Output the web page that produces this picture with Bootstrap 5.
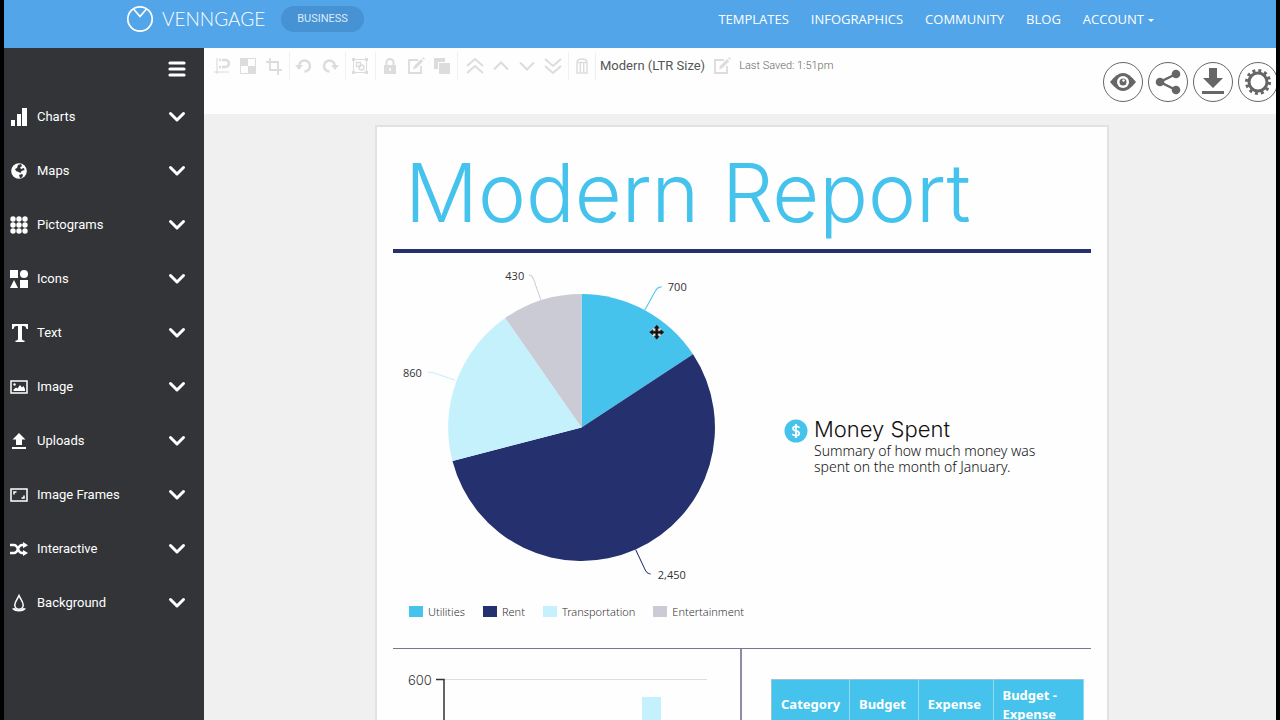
<!DOCTYPE html>
<html lang="en">
<head>
<meta charset="utf-8">
<meta name="viewport" content="width=device-width, initial-scale=1">
<title>Venngage – Modern (LTR Size)</title>
<link href="https://cdn.jsdelivr.net/npm/bootstrap@5.3.0/dist/css/bootstrap.min.css" rel="stylesheet">
<style>
  :root { --sky: #45c3ec; --navy: #25306e; --ice: #c5f1fd; --stone: #cbcbd5; }
  body { background: #000; padding: 0 4px; font-family: Roboto, "Open Sans", sans-serif; font-weight: 300; }
  .topbar { background: #52a5e9; min-height: 48px; padding-bottom: 10px; color: #fff; }
  .topbar-inner { max-width: 1028px; }
  .brand-name { font: 300 19px/28px Lato, sans-serif; }
  .plan { background: #4792d3; color: #d8ecfc; font-size: 11px; font-weight: 400; line-height: 26px; padding: 0 16px; }
  .main-links { gap: 22px; font: 400 13px/28px "Open Sans", sans-serif; }
  .main-links a { color: #fff; text-decoration: none; }
  .main-links .dropdown-toggle::after { border-width: 3px; border-bottom-width: 0; margin-left: 4px; vertical-align: 2px; }
  .side { width: 200px; background: #333437; }
  .side button { border: 0; background: none; color: #fff; text-align: left; }
  .side-toggle { height: 42px; padding: 0 18px; }
  .side-item { height: 54px; padding: 0 18px 0 6px; gap: 9px; font-size: 13px; }
  .workspace { min-width: 0; background: #f0f0f0; }
  .tools { height: 66px; background: #fefefe; }
  .tool-group { height: 28px; padding: 0 2px 0 1px; border-right: 1px solid #f0f0f0; }
  .tool-btn { width: 26px; height: 28px; padding: 0; border: 0; background: none; color: #dcdcdc; }
  .tool-btn svg, .side-item svg { display: block; margin: auto; }
  .side-item svg { margin: 0; }
  .doc-name { font-size: 13px; color: #555; font-weight: 400; }
  .saved { font-size: 11px; color: #666; }
  .round-actions { gap: 5px; margin: 14px -2px 0 0; }
  .round-btn { width: 40px; height: 40px; border: 1px solid #666; background: #fff; color: #666; padding: 0; }
  .canvas-area { padding: 11px 0 0 4px; }
  .sheet { width: 100%; max-width: 734px; min-height: 950px; border: 2px solid #e2e2e2; background: #fefefe; padding: 24px 16px 0; }
  .sheet h1 { font: 300 81px/84px Inter, sans-serif; color: var(--sky); margin: 0 0 0 12px; white-space: nowrap; }
  .thick-rule { height: 4px; background: var(--navy); opacity: 1; border: 0; margin: 14px 0 9px; }
  .legend-row { gap: 18px; padding: 0 16px; font: 300 11px/16px "Noto Sans", sans-serif; color: #333; margin-top: 13px; }
  .legend-row li { gap: 5px; }
  .swatch { width: 14px; height: 11px; }
  .note { padding: 38px 0 0 42px; font-family: "Noto Sans", sans-serif; }
  .note-text { margin-left: 6px; }
  .note h2 { font: 300 22px/28px Inter, sans-serif; color: #111; margin: 0; }
  .note p { font-size: 14px; line-height: 16px; color: #111; margin: 0; }
  .lower { border-top: 1px solid #77778f; margin-top: 28px; }
  .lower-left { border-right: 2px solid #8c8ca4; height: 300px; }
  .lower-right { padding: 30px 7px 0 29px; }
  .budget { font: 700 13px/19px "Noto Sans", sans-serif; table-layout: fixed; width: 100%; border: 1px solid #9cc4cf; }
  .budget th { background: var(--sky); color: #fff; padding: 6px 4px 6px 9px; vertical-align: middle; border-right: 1px solid #8fdbf4; }
  svg text { fill: #333; }
</style>
</head>
<body>
<svg width="0" height="0" class="position-absolute" aria-hidden="true">
  <symbol id="chev" viewBox="0 0 18 12"><path d="M2.500 2.500 9 9l6.500-6.500" fill="none" stroke="currentColor" stroke-width="3" stroke-linecap="round" stroke-linejoin="round"/></symbol>
  <symbol id="edit" viewBox="0 0 18 18"><path d="M11 3H2v13h12V9" fill="none" stroke="currentColor" stroke-width="1.800"/><path d="m6 12.500 1-3.500L14 2l2.200 2.200-7 7zM15 1l1-1 2 2-1 1z" fill="currentColor"/></symbol>
</svg>
<div class="vh-100 d-flex flex-column overflow-hidden">
  <header class="topbar">
    <div class="topbar-inner mx-auto d-flex align-items-center h-100">
      <a href="#" class="d-flex align-items-center text-white text-decoration-none">
        <svg width="28" height="28" viewBox="0 0 28 28" fill="none" stroke="#fff" stroke-width="1.700"><circle cx="14" cy="14" r="12.200"/><path d="M7.500 4 14 11.500 20.500 4"/></svg>
        <span class="brand-name ms-2">VENNGAGE</span>
      </a>
      <span class="plan rounded-pill ms-3">BUSINESS</span>
      <nav class="main-links d-flex ms-auto">
        <a href="#">TEMPLATES</a><a href="#">INFOGRAPHICS</a><a href="#">COMMUNITY</a><a href="#">BLOG</a><a href="#" class="dropdown-toggle">ACCOUNT</a>
      </nav>
    </div>
  </header>
  <div class="d-flex flex-grow-1 overflow-hidden">
    <aside class="side flex-shrink-0 d-flex flex-column">
      <button class="side-toggle d-flex align-items-center justify-content-end" aria-label="Menu"><svg width="18" height="16" viewBox="0 0 18 16"><path d="M2 2h14M2 8h14M2 14h14" stroke="#fff" stroke-width="3.200" stroke-linecap="round"/></svg></button>
      <button class="side-item d-flex align-items-center"><svg width="18" height="18" fill="#fff"><path d="M1 12h4v6H1zM7 6h4v12H7zM12 0h5v18h-5z"/></svg><span>Charts</span><svg class="ms-auto" width="18" height="12"><use href="#chev"/></svg></button>
      <button class="side-item d-flex align-items-center"><svg width="18" height="18"><circle cx="9" cy="9" r="7.800" fill="#fff"/><path d="M8 3l3-1 1 2-2 1.500 1 1.500 3-1 .5 2-3 1-1 2-2-1-2.500-1L5 7l2-1zM9 13l3-1 1 1-1 2.500-2 .5z" fill="#333437"/></svg><span>Maps</span><svg class="ms-auto" width="18" height="12"><use href="#chev"/></svg></button>
      <button class="side-item d-flex align-items-center"><svg width="18" height="18" fill="#fff"><circle cx="3" cy="3" r="2.700"/><circle cx="9" cy="3" r="2.700"/><circle cx="15" cy="3" r="2.700"/><circle cx="3" cy="9" r="2.700"/><circle cx="9" cy="9" r="2.700"/><circle cx="15" cy="9" r="2.700"/><circle cx="3" cy="15" r="2.700"/><circle cx="9" cy="15" r="2.700"/><circle cx="15" cy="15" r="2.700"/></svg><span>Pictograms</span><svg class="ms-auto" width="18" height="12"><use href="#chev"/></svg></button>
      <button class="side-item d-flex align-items-center"><svg width="18" height="18" fill="#fff"><path d="M0 0h8v8H0zM10 10h8v8h-8zM4 10l4 8H0z"/><circle cx="14" cy="4" r="4"/></svg><span>Icons</span><svg class="ms-auto" width="18" height="12"><use href="#chev"/></svg></button>
      <button class="side-item d-flex align-items-center"><svg width="18" height="18" fill="#fff"><path d="M2 0h16v5h-1.500C16 2.500 15 2 12 2v12.500c0 1.500.5 2 2.500 2V18h-9v-1.500c2 0 2.500-.5 2.500-2V2C5 2 4 2.500 3.500 5H2z"/></svg><span>Text</span><svg class="ms-auto" width="18" height="12"><use href="#chev"/></svg></button>
      <button class="side-item d-flex align-items-center"><svg width="18" height="14"><path d="M1 1h16v12H1z" fill="none" stroke="#fff" stroke-width="1.500"/><path d="M3.500 11V9.500L6 7.500l1.500 1L10 5l2 2.500L13.500 6l1.500 3v2z" fill="#fff"/><circle cx="4.500" cy="4.500" r="1.200" fill="#fff"/></svg><span>Image</span><svg class="ms-auto" width="18" height="12"><use href="#chev"/></svg></button>
      <button class="side-item d-flex align-items-center"><svg width="18" height="18" fill="#fff"><path d="M9 1l6.500 6.500H12V13H6V7.500H2.500zM2 15h14v2H2z"/></svg><span>Uploads</span><svg class="ms-auto" width="18" height="12"><use href="#chev"/></svg></button>
      <button class="side-item d-flex align-items-center"><svg width="18" height="14" fill="none" stroke="#fff" stroke-width="1.500"><path d="M1 1h16v12H1z"/><path d="M4 6.500V4h2.500M14 7.500V10h-2.500"/></svg><span>Image Frames</span><svg class="ms-auto" width="18" height="12"><use href="#chev"/></svg></button>
      <button class="side-item d-flex align-items-center"><svg width="18" height="14"><path d="M0 3h4c5 0 3 8 8 8h2M0 11h4c5 0 3-8 8-8h2" fill="none" stroke="#fff" stroke-width="2.300"/><path d="M13 0l5 3.200L13 6.200zM13 8l5 3-5 3z" fill="#fff"/></svg><span>Interactive</span><svg class="ms-auto" width="18" height="12"><use href="#chev"/></svg></button>
      <button class="side-item d-flex align-items-center"><svg width="18" height="18"><path d="M9 1.500C7 6 4.800 8 4.800 11a4.200 4.200 0 0 0 8.400 0C13.200 8 11 6 9 1.500z" fill="none" stroke="#fff" stroke-width="1.500"/><path d="M2 14.500l3-.5c2 2 6 2 8 0l3 .5c-1 2-4 3-7 3s-6-1-7-3z" fill="#fff"/></svg><span>Background</span><svg class="ms-auto" width="18" height="12"><use href="#chev"/></svg></button>
    </aside>
    <main class="workspace flex-grow-1 overflow-hidden">
      <div class="tools d-flex align-items-start">
        <div class="d-flex align-items-center ps-1 pt-1">
          <div class="tool-group d-flex">
            <button class="tool-btn" aria-label="Snap"><svg width="18" height="18" fill="none" stroke="currentColor"><path d="M4 1v16M1 15h15" stroke-width="1.200"/><path d="M9 3h3.500a3 3 0 0 1 0 7H9" stroke-width="2.500"/><path d="M6 3h2M6 10h2" stroke-width="2.500"/></svg></button>
            <button class="tool-btn" aria-label="Opacity"><svg width="18" height="18"><path d="M1.500 1.500h15v15h-15z" fill="none" stroke="currentColor"/><path d="M1 1h8v8H1zM9 9h8v8H9z" fill="currentColor"/></svg></button>
            <button class="tool-btn" aria-label="Crop"><svg width="18" height="18" fill="none" stroke="currentColor" stroke-width="1.800"><path d="M1 5h12v13M5 1v12h12"/></svg></button>
          </div>
          <div class="tool-group d-flex">
            <button class="tool-btn" aria-label="Undo"><svg width="18" height="18"><path d="M4 9a5.500 5.500 0 1 1 5.500 5.500" fill="none" stroke="currentColor" stroke-width="2.500"/><path d="M0 8h8l-4 5z" fill="currentColor"/></svg></button>
            <button class="tool-btn" aria-label="Redo"><svg width="18" height="18"><path d="M14 9a5.500 5.500 0 1 0-5.500 5.500" fill="none" stroke="currentColor" stroke-width="2.500"/><path d="M10 8h8l-4 5z" fill="currentColor"/></svg></button>
          </div>
          <div class="tool-group d-flex">
            <button class="tool-btn" aria-label="Group"><svg width="18" height="18" fill="none" stroke="currentColor"><path d="M2.500 2.500h13v13h-13z"/><path d="M1 1h3v3H1zM14 1h3v3h-3zM1 14h3v3H1zM14 14h3v3h-3z" fill="currentColor" stroke="none"/><path d="M5.500 5.500h4v4h-4z" stroke-width="1.400"/><circle cx="10.500" cy="10.500" r="2.500" stroke-width="1.400"/></svg></button>
          </div>
          <div class="tool-group d-flex">
            <button class="tool-btn" aria-label="Lock"><svg width="18" height="18"><path d="M5.500 9V5.500a3.500 3.500 0 0 1 7 0V9" fill="none" stroke="currentColor" stroke-width="2"/><path d="M3 8h12v9H3z" fill="currentColor"/><path d="M9 11v3" stroke="#fff" stroke-width="1.500"/></svg></button>
            <button class="tool-btn" aria-label="Edit"><svg width="18" height="18"><use href="#edit"/></svg></button>
            <button class="tool-btn" aria-label="Duplicate"><svg width="18" height="18" fill="currentColor"><path d="M1 1h11v4H5v7H1zM6 6h11v11H6z"/></svg></button>
          </div>
          <div class="tool-group d-flex ps-1">
            <button class="tool-btn" aria-label="Bring to front"><svg width="18" height="18" fill="none" stroke="currentColor" stroke-width="2"><path d="M1 9l8-7 8 7M1 16l8-7 8 7"/></svg></button>
            <button class="tool-btn" aria-label="Bring forward"><svg width="18" height="18" fill="none" stroke="currentColor" stroke-width="2"><path d="M2 12.500l7-7 7 7"/></svg></button>
            <button class="tool-btn" aria-label="Send backward"><svg width="18" height="18" fill="none" stroke="currentColor" stroke-width="2"><path d="M2 5.500l7 7 7-7"/></svg></button>
            <button class="tool-btn" aria-label="Send to back"><svg width="18" height="18" fill="none" stroke="currentColor" stroke-width="2"><path d="M1 2l8 7 8-7M1 9l8 7 8-7"/></svg></button>
          </div>
          <div class="tool-group d-flex px-0">
            <button class="tool-btn" aria-label="Delete"><svg width="18" height="18" fill="none" stroke="currentColor" stroke-width="1.400"><path d="M4 5.500h10V16H4zM4 5.500Q4 2 9 2t5 3.500M7.300 6v9M10.700 6v9"/></svg></button>
          </div>
          <span class="doc-name ms-1">Modern (LTR Size)</span>
          <button class="tool-btn ms-1" aria-label="Rename"><svg width="18" height="18"><use href="#edit"/></svg></button>
          <span class="saved ms-1">Last Saved: 1:51pm</span>
        </div>
        <div class="round-actions d-flex ms-auto">
          <button class="round-btn rounded-circle" aria-label="Preview"><svg width="28" height="28" viewBox="0 0 28 28"><path d="M1 14Q8 5 14 5t13 9q-7 9-13 9T1 14z" fill="currentColor"/><circle cx="14" cy="14" r="6" fill="#fff"/><circle cx="14" cy="14" r="3.500" fill="currentColor"/><circle cx="14.500" cy="12.500" r="1.200" fill="#fff"/></svg></button>
          <button class="round-btn rounded-circle" aria-label="Share"><svg width="28" height="28" viewBox="0 0 28 28"><path d="M22 6 6 14l16 8" fill="none" stroke="currentColor" stroke-width="2.500"/><g fill="currentColor"><circle cx="22" cy="6" r="4.300"/><circle cx="6" cy="14" r="4.300"/><circle cx="22" cy="22" r="4.300"/></g></svg></button>
          <button class="round-btn rounded-circle" aria-label="Download"><svg width="28" height="28" viewBox="0 0 28 28" fill="currentColor"><path d="M10 0h8v10h6L14 20 4 10h6zM3 23h22v3H3z"/></svg></button>
          <button class="round-btn rounded-circle" aria-label="Settings"><svg width="28" height="28" viewBox="0 0 28 28" fill="none" stroke="currentColor"><circle cx="14" cy="14" r="9" stroke-width="3"/><circle cx="14" cy="14" r="11.500" stroke-width="3" stroke-dasharray="3 3.020"/></svg></button>
        </div>
      </div>
      <div class="canvas-area">
        <article class="sheet mx-auto">
          <h1>Modern Report</h1>
          <hr class="thick-rule">
          <div class="row g-0 align-items-center">
            <div class="col-6">
              <svg class="d-block w-100" viewBox="394 262 348 328" font-family="Open Sans, sans-serif" font-size="11" font-weight="400" role="img" aria-label="Spending by category">
                <path d="M582 427V294A133 133 0 0 1 693.200 354.100z" fill="#45c3ec"/>
                <path d="M582 427 693.200 354.100A133 133 0 1 1 453.300 460.500z" fill="#25306e"/>
                <path d="M582 427 453.300 460.500A133 133 0 0 1 505.900 317.900z" fill="#c5f1fd"/>
                <path d="M582 427 505.900 317.900A133 133 0 0 1 582 294z" fill="#cbcbd5"/>
                <g fill="none"><path d="M645 310l10-18q3-6 7-5" stroke="#45c3ec"/><path d="M541.500 300l-7-20q-2-5-5-5" stroke="#cbcbd5"/><path d="M456 380l-20-7q-3-1-7-1" stroke="#c5f1fd"/><path d="M636 549l9 19q2 5 6 5" stroke="#25306e"/></g>
                <text x="668" y="291">700</text><text x="506" y="280">430</text><text x="404" y="377">860</text><text x="658" y="578">2,450</text>
                <circle cx="657" cy="332" r="5.500" fill="#ddd"/>
                <path d="M657 325l2.500 3H658v3h3v-1.500l3 2.500-3 2.500V333h-3v3h1.500l-2.500 3-2.500-3h1.500v-3h-3v1.500l-3-2.500 3-2.500v1.500h3v-3h-1.500z" fill="#111" stroke="#111" stroke-width=".6"/>
              </svg>
            </div>
            <div class="col-6 note d-flex align-items-start">
              <svg class="flex-shrink-0 mt-1" width="24" height="24" viewBox="0 0 24 24"><circle cx="12" cy="12" r="11.500" fill="#45c3ec"/><path d="M15.500 8.800Q14.500 7.300 12 7.300q-3 0-3 2.200 0 1.800 3 2.400 3.200.6 3.200 2.600t-3.200 2.200q-2.500 0-3.700-1.700M12 5v14" fill="none" stroke="#fff" stroke-width="1.800"/></svg>
              <div class="note-text"><h2>Money Spent</h2><p>Summary of how much money was<br>spent on the month of January.</p></div>
            </div>
          </div>
          <ul class="legend-row list-unstyled d-flex mb-0">
            <li class="d-flex align-items-center"><svg class="swatch"><rect width="14" height="11" fill="#45c3ec"/></svg>Utilities</li>
            <li class="d-flex align-items-center"><svg class="swatch"><rect width="14" height="11" fill="#25306e"/></svg>Rent</li>
            <li class="d-flex align-items-center"><svg class="swatch"><rect width="14" height="11" fill="#c5f1fd"/></svg>Transportation</li>
            <li class="d-flex align-items-center"><svg class="swatch"><rect width="14" height="11" fill="#cbcbd5"/></svg>Entertainment</li>
          </ul>
          <div class="row g-0 lower">
            <div class="col-6 lower-left">
              <svg class="d-block w-100" viewBox="394 650 347 250" role="img" aria-label="Bar chart">
                <path d="M437 680.500h271" stroke="#ddd"/><path d="M437 680.500h8V890" fill="none" stroke="#333" stroke-width="1.500"/>
                <path d="M643 698h19v192h-19z" fill="#c5f1fd"/><text x="409" y="686" font-family="Inter, sans-serif" font-weight="300" font-size="13">600</text>
              </svg>
            </div>
            <div class="col-6 lower-right">
              <table class="budget"><colgroup><col style="width:25%"><col style="width:22%"><col style="width:24%"><col></colgroup>
                <thead><tr><th scope="col">Category</th><th scope="col">Budget</th><th scope="col">Expense</th><th scope="col">Budget -<br>Expense</th></tr></thead></table>
            </div>
          </div>
        </article>
      </div>
    </main>
  </div>
</div>
<script src="https://cdn.jsdelivr.net/npm/bootstrap@5.3.0/dist/js/bootstrap.bundle.min.js"></script>
</body>
</html>
